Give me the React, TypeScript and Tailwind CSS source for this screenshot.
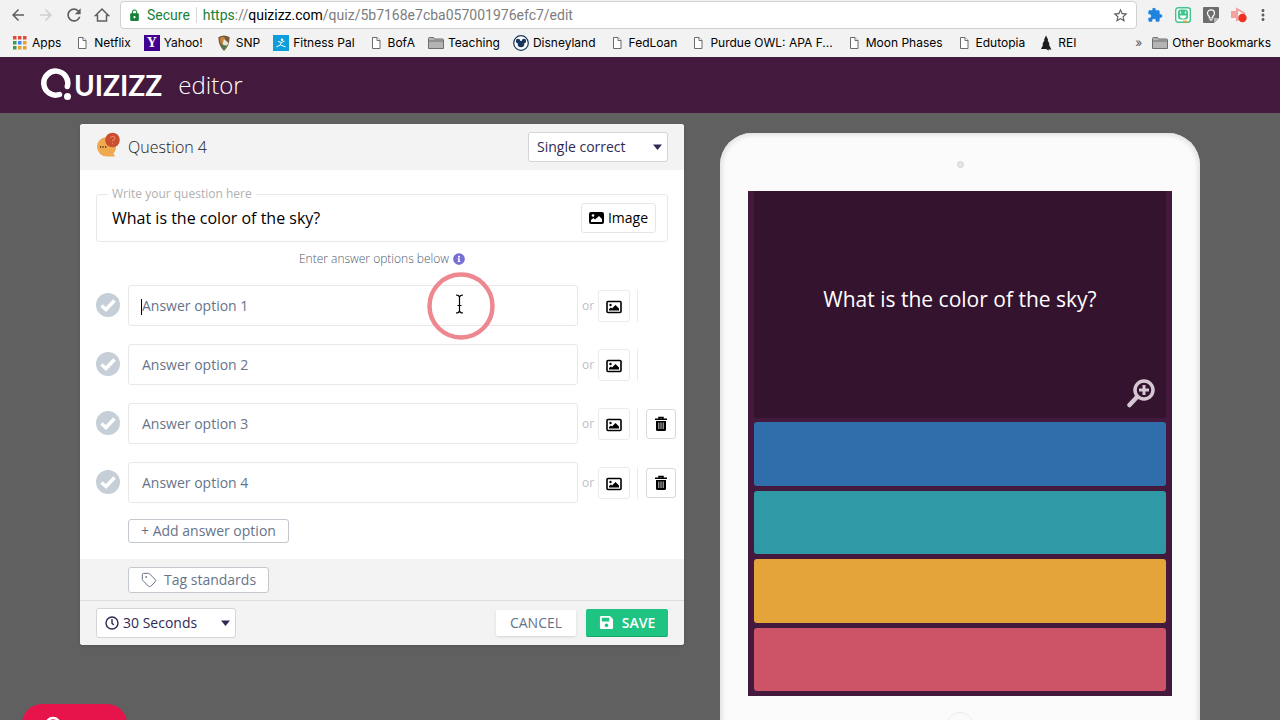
import type { ReactNode } from 'react'
import { Tag } from 'lucide-react'
import { FaInfoCircle, FaSave } from 'react-icons/fa'
import { MdArrowBack, MdArrowForward, MdExtension, MdLock, MdMoreVert, MdRefresh, MdStarBorder } from 'react-icons/md'

const PageIcon = () => (
  <svg width="16" height="16" viewBox="0 0 16 16" fill="#fff" stroke="#6b6b6b">
    <path d="M4.5 2.5h4.5l3 3v8h-7.5z" />
    <path d="M9 2.5v3h3" />
  </svg>
)

const FolderIcon = () => (
  <svg width="16" height="16" viewBox="0 0 16 16">
    <path d="M.5 13.5v-10q0-1 1-1h4l1 1.5h8q1 0 1 1v8.500z" fill="#b4b4b4" stroke="#6f6f6f" />
    <path d="M1 6h14" stroke="#6f6f6f" />
  </svg>
)

const AppsIcon = () => {
  const colors = ['#dd4b39', '#dd4b39', '#dd4b39', '#3c9a4e', '#4285f4', '#e8a02c', '#3c9a4e', '#e8a02c', '#e8a02c']
  return (
    <svg width="16" height="16" viewBox="0 0 16 16">
      {colors.map((c, i) => (
        <rect key={i} x={1 + (i % 3) * 5} y={1 + Math.floor(i / 3) * 5} width="3.500" height="3.500" fill={c} />
      ))}
    </svg>
  )
}

const YahooIcon = () => (
  <span className="w-4 h-4 bg-[#400090] text-white text-sm leading-4 text-center font-['Liberation_Serif',serif] font-bold">Y</span>
)

const ParkIcon = () => (
  <svg width="16" height="16" viewBox="0 0 16 16">
    <path d="M2.500 2q5.500-3 11 0 .5 8-5.500 14Q2 10 2.500 2z" fill="#7a5a3c" />
    <path d="M4 3Q7 1 9 3L7.500 9 4.500 8z" fill="#c8873c" />
    <path d="M8 4l4.500 4-2 3H6z" fill="#e9e6dc" />
    <path d="M4.500 9l3.500 1 3.500 1L8 15z" fill="#4f7d4a" />
  </svg>
)

const FitnessIcon = () => (
  <svg width="16" height="16" viewBox="0 0 16 16">
    <rect width="16" height="16" fill="#0c9fdc" />
    <circle cx="9" cy="4.800" r="1.200" fill="#fff" />
    <path d="M5 6.500l3.500 1 3-1.500M8.500 7.500L7 10.200l-3.500 1.600M7.500 10l5 1.800" fill="none" stroke="#fff" />
  </svg>
)

const MouseIcon = () => (
  <svg width="16" height="16" viewBox="0 0 16 16" fill="#17365c">
    <circle cx="8" cy="8" r="7.300" fill="#fff" stroke="#17365c" strokeWidth="1.200" />
    <circle cx="5" cy="6" r="2.200" />
    <circle cx="11" cy="6" r="2.200" />
    <circle cx="8" cy="9" r="3.300" />
  </svg>
)

const TreeIcon = () => (
  <svg width="16" height="16" viewBox="0 0 16 16" fill="#1d1d1d">
    <path d="M8 .5l2 4-.3.8 1.800 3.700-.5.7 2.500 5-3-.5.500 1.500L8 14H3l2-4-.5-1 2-4-.4-.6z" />
  </svg>
)

const bookmarks: { label: string; icon: ReactNode }[] = [
  { label: 'Apps', icon: <AppsIcon /> },
  { label: 'Netflix', icon: <PageIcon /> },
  { label: 'Yahoo!', icon: <YahooIcon /> },
  { label: 'SNP', icon: <ParkIcon /> },
  { label: 'Fitness Pal', icon: <FitnessIcon /> },
  { label: 'BofA', icon: <PageIcon /> },
  { label: 'Teaching', icon: <FolderIcon /> },
  { label: 'Disneyland', icon: <MouseIcon /> },
  { label: 'FedLoan', icon: <PageIcon /> },
  { label: 'Purdue OWL: APA F...', icon: <PageIcon /> },
  { label: 'Moon Phases', icon: <PageIcon /> },
  { label: 'Edutopia', icon: <PageIcon /> },
  { label: 'REI', icon: <TreeIcon /> },
]

function Bookmark({ label, icon }: { label: string; icon: ReactNode }) {
  return (
    <a href="#" className="flex items-center gap-1 whitespace-nowrap">
      {icon}
      {label}
    </a>
  )
}

function BrowserBar() {
  return (
    <div className="shrink-0 bg-[#f2f2f2] text-black font-[Inter,sans-serif]">
      <div className="flex items-center h-[30px] pl-2 pr-2 text-[#5f5f5f]">
        <div className="flex items-center gap-2 mr-2">
          <button aria-label="Back" className="w-5 flex justify-center"><MdArrowBack size={18} /></button>
          <button aria-label="Forward" className="w-5 flex justify-center text-[#cfcfcf]"><MdArrowForward size={18} /></button>
          <button aria-label="Reload" className="w-5 flex justify-center"><MdRefresh size={20} /></button>
          <button aria-label="Home" className="w-5 flex justify-center">
            <svg width="16" height="16" viewBox="0 0 16 16" fill="none" stroke="currentColor" strokeWidth="1.500">
              <path d="M1.500 8.500L8 2l6.500 6.500H12.500v5.500h-9V8.500z" />
            </svg>
          </button>
        </div>
        <div className="flex-1 flex items-center h-7 px-[7px] bg-white border border-[#d0d0d0] rounded font-[Roboto,sans-serif] text-sm">
          <MdLock size={13} className="text-[#188038] mr-1.5" />
          <span className="text-[#188038]">Secure</span>
          <span className="w-px h-4 mx-1.5 bg-[#d8d8d8]" />
          <span className="flex-1 text-[#7d7d7d]">
            <span className="text-[#188038]">https</span>://<span className="text-black">quizizz.com</span>/quiz/5b7168e7cba057001976efc7/edit
          </span>
          <button aria-label="Bookmark this page"><MdStarBorder size={17} /></button>
        </div>
        <div className="flex items-center gap-3 ml-2.5">
          <MdExtension size={16} className="text-[#1f84e0]" />
          <svg width="16" height="16" viewBox="0 0 16 16">
            <rect x=".7" y=".7" width="14.600" height="14.600" rx="2.500" fill="#fff" stroke="#41c48c" strokeWidth="1.400" />
            <rect x="3" y="2.500" width="10" height="10" rx="3" fill="#41c48c" />
            <path d="M5.500 4.500v2M10.500 4.500v2" stroke="#fff" strokeWidth="1.300" />
            <path d="M4.500 8.500h7q-.5 3-3.500 3t-3.500-3z" fill="#fff" />
            <path d="M8 14.500h4" stroke="#e5a13a" strokeWidth="1.800" />
          </svg>
          <svg width="16" height="16" viewBox="0 0 16 16">
            <path d="M1 0h14q1 0 1 1v10l-5 5H1q-1 0-1-1V1q0-1 1-1z" fill="#6d6d6d" />
            <path d="M11 16v-5h5z" fill="#b5b5b5" />
            <path d="M6.300 9.500Q4.500 8 4.500 6.300a3.500 3.500 0 017 0Q11.500 8 9.700 9.500V11H6.300zM6.500 12.800h3" fill="none" stroke="#fff" strokeWidth="1.200" />
          </svg>
          <svg width="16" height="16" viewBox="0 0 16 16">
            <rect x="0" y="4" width="5" height="7" fill="#f3a29d" />
            <path d="M6 2l7 4v4l-7 3z" fill="none" stroke="#f3a29d" strokeWidth="2" />
            <circle cx="11.500" cy="11" r="4.200" fill="#ef3023" />
          </svg>
        </div>
        <button aria-label="Menu" className="ml-[7px]"><MdMoreVert size={18} /></button>
      </div>
      <nav className="flex items-center h-[27px] pl-3 pr-[9px] pb-0.5 text-xs">
        <div className="flex-1 flex items-center gap-[13px]">
          {bookmarks.map((b) => <Bookmark key={b.label} {...b} />)}
        </div>
        <span className="mr-2.5 text-[#555]">»</span>
        <Bookmark label="Other Bookmarks" icon={<FolderIcon />} />
      </nav>
    </div>
  )
}

function Logo() {
  return (
    <div role="img" aria-label="Quizizz" className="flex items-center h-9 text-white">
      <svg width="32" height="34" viewBox="0 0 32 34" fill="none" className="mr-0.5">
        <path d="M19.500 26.500A12 12 0 1 1 27.300 18.500" stroke="#fff" strokeWidth="5.500" strokeLinecap="round" />
        <circle cx="27.500" cy="28.500" r="3.500" fill="#fff" />
      </svg>
      <span className="font-[Lato,sans-serif] font-bold text-[28px] leading-none">UIZIZZ</span>
    </div>
  )
}

const Caret = () => (
  <svg width="9" height="6" viewBox="0 0 9 6" className="absolute right-1.5 top-3 pointer-events-none" fill="#2f2a55">
    <path d="M0 .5h9L4.500 6z" />
  </svg>
)

const PictureIcon = () => (
  <svg width="16" height="14" viewBox="0 0 16 14">
    <rect x="1" y="1.500" width="14" height="11" rx="1" fill="none" stroke="#000" strokeWidth="1.600" />
    <circle cx="4.500" cy="5" r="1.200" />
    <path d="M3 10.500V9l2-1.500 1 1L9.500 5 13 8.500v2z" />
  </svg>
)

const TrashIcon = () => (
  <svg width="14" height="16" viewBox="0 0 14 16">
    <path d="M1 3.200h12M5 2.500V1.500h4v1" fill="none" stroke="#000" strokeWidth="1.500" />
    <path d="M2 5h10v8.500q0 1.500-1.500 1.500h-7Q2 15 2 13.500z" />
    <path d="M4.800 6.500v6.500M7 6.500v6.500M9.200 6.500v6.500" stroke="#fff" strokeWidth=".8" />
  </svg>
)

const PointerRing = () => (
  <svg width="68" height="68" viewBox="0 0 68 68" fill="none" className="absolute left-[299px] -top-[13px] pointer-events-none">
    <circle cx="34" cy="34" r="31.500" stroke="#ee8890" strokeWidth="4.500" />
    <path d="M29 23q3 0 3.500 2 .5-2 3.500-2M32.500 25v14M29 41q3 0 3.500-2 .5 2 3.500 2M30.500 33.500h4" stroke="#000" strokeWidth="1.200" />
  </svg>
)

function AnswerRow({ n, removable, active }: { n: number; removable: boolean; active: boolean }) {
  return (
    <div className="flex items-center">
      <label className="grid w-6 h-6 mr-2 mb-0.5">
        <input
          type="radio"
          name="correct"
          aria-label={`Mark option ${n} as correct`}
          className="[grid-area:1/1] appearance-none w-6 h-6 rounded-full bg-[#c6cfd8]"
        />
        <svg width="24" height="24" viewBox="0 0 24 24" className="[grid-area:1/1] pointer-events-none" fill="none">
          <path d="M5.500 12.500l4.500 4 8.500-9" stroke="#fff" strokeWidth="3.500" />
        </svg>
      </label>
      <div className="relative flex-1">
        <input
          type="text"
          aria-label={`Answer option ${n}`}
          placeholder={`Answer option ${n}`}
          className="block w-full h-[41px] px-[13px] border border-[#e8e8ea] rounded-[3px] text-sm text-black placeholder:text-[#667489] placeholder:opacity-100"
        />
        {active && <span className="absolute left-[13px] top-3.5 w-px h-4 bg-black" />}
        {active && <PointerRing />}
      </div>
      <span className="w-5 text-center text-xs text-[#b9bfc8]">or</span>
      <button aria-label="Add image" className="flex items-center justify-center w-8 h-8 pt-0.5 border border-[#ebebed] rounded-[3px]">
        <PictureIcon />
      </button>
      <span className="w-px h-8 ml-[7px] mr-2 bg-[#ebebed]" />
      <div className="w-[30px]">
        {removable && (
          <button aria-label="Delete option" className="flex items-center justify-center w-[30px] h-[30px] border border-[#d9d9dc] rounded-[3px]">
            <TrashIcon />
          </button>
        )}
      </div>
    </div>
  )
}

function QuestionCard() {
  return (
    <section className="flex-1 rounded-[3px] overflow-hidden bg-white shadow">
      <div className="flex items-center h-[46px] px-4 bg-[#f3f3f3]">
        <svg width="24" height="26" viewBox="0 0 24 26" className="mr-2 mb-1">
          <path d="M11 5a10 9.700 0 100 19.500h8l-1.500-3A10 10 0 0011 5z" fill="#efa94e" />
          <circle cx="16.500" cy="8" r="7.300" fill="#c94f30" />
          <path d="M14.300 6.300q.2-2 2.300-2 2.200 0 2.200 1.900 0 1.200-1.400 1.900-.9.500-.9 1.500M16.500 11v1.300" fill="none" stroke="#e5815f" strokeWidth="1.200" />
          <path d="M4 15h1.200M6.500 15h1.200M9 15h1.200" stroke="#4a2d20" strokeWidth="1.300" />
        </svg>
        <h1 className="flex-1 text-base font-light text-[#222]">Question 4</h1>
        <div className="relative">
          <select aria-label="Question type" className="block appearance-none w-[140px] h-[30px] pl-2 bg-white border border-[#d5d5d8] rounded-[3px] text-sm text-[#2f2a55]">
            <option>Single correct</option>
          </select>
          <Caret />
        </div>
      </div>

      <div className="pt-6 pb-4">
        <div className="relative flex items-center h-12 mx-4 pl-[15px] pr-[11px] border border-[#e8e8ea] rounded-[3px]">
          <label htmlFor="question" className="absolute left-[11px] -top-2.5 px-1 bg-white text-xs leading-[18px] text-[#b0b0b0]">
            Write your question here
          </label>
          <input id="question" type="text" defaultValue="What is the color of the sky?" className="flex-1 text-base text-black" />
          <button className="flex items-center gap-1 h-[30px] px-[7px] border border-[#e6e6e8] rounded-[3px] text-sm text-black">
            <svg width="15" height="12" viewBox="0 0 15 12">
              <rect width="15" height="12" rx="2" />
              <circle cx="4" cy="3.500" r="1.300" fill="#fff" />
              <path d="M2 10V8l2.500-2 1.500 1.500L10 4l3 3v3z" fill="#fff" />
            </svg>
            Image
          </button>
        </div>
        <p className="flex items-center justify-center gap-1 h-[18px] mt-2 text-xs font-light text-[#4d5b70]">
          Enter answer options below <FaInfoCircle size={12} className="text-[#786fd5]" />
        </p>
        <div className="flex flex-col gap-[18px] mt-[17px] pl-4 pr-2">
          {[1, 2, 3, 4].map((n) => <AnswerRow key={n} n={n} removable={n > 2} active={n === 1} />)}
        </div>
        <button className="flex items-center h-6 mt-4 ml-12 px-3 border border-[#c3c8cf] rounded-[3px] text-sm text-[#667489]">
          + Add answer option
        </button>
      </div>

      <div className="px-12 pt-2 pb-[7px] bg-[#f3f3f3] border-b border-[#dcdcde]">
        <button className="flex items-center gap-[7px] h-[26px] px-3 bg-white border border-[#c3c8cf] rounded-[3px] text-sm text-[#667489]">
          <Tag size={16} strokeWidth={1.500} />
          Tag standards
        </button>
      </div>

      <div className="flex items-center h-11 px-4 bg-[#f3f3f3] text-sm">
        <div className="relative mr-auto">
          <svg width="14" height="14" viewBox="0 0 14 14" className="absolute left-[9px] top-2 pointer-events-none z-10" fill="none" stroke="#2f2a55" strokeWidth="1.400">
            <circle cx="7" cy="7" r="6" />
            <path d="M7 3v4.200l1.800 1.800" />
          </svg>
          <select aria-label="Time limit" className="block appearance-none w-[140px] h-[30px] pl-[26px] bg-white border border-[#d5d5d8] rounded-[3px] text-[#2f2a55]">
            <option>30 Seconds</option>
          </select>
          <Caret />
        </div>
        <button className="h-[26px] w-20 mr-2.5 bg-white rounded-xs shadow-sm text-[#667489]">CANCEL</button>
        <button className="flex items-center justify-center gap-2 w-[82px] h-7 bg-[#1fc483] border-b border-[#17a56c] rounded-xs text-white font-semibold">
          <FaSave size={15} />
          SAVE
        </button>
      </div>
    </section>
  )
}

function TabletPreview() {
  return (
    <section className="relative w-[480px] mt-[9px] px-7 pt-[58px] pb-[70px] rounded-[32px] bg-[#fbfbfb] shadow-[inset_0_0_5px_2px_#dedede]">
      <span className="absolute left-[237px] top-7 w-[7px] h-[7px] rounded-full bg-[#e6e6e6] border border-[#d2d2d2]" />
      <div className="flex flex-col h-[505px] px-1.5 pb-[5px] gap-1 bg-[#431a3d]">
        <div className="relative flex items-center justify-center h-[227px] pb-2.5 bg-[#34132f] text-[21px] text-white">
          What is the color of the sky?
          <button aria-label="Zoom" className="absolute right-[11px] bottom-2.5">
            <svg width="28" height="30" viewBox="0 0 28 30" fill="none" stroke="#d6c8d3">
              <circle cx="17" cy="12" r="9" strokeWidth="3.500" />
              <path d="M17 7v10M12 12h10" strokeWidth="3" />
              <path d="M10 19l-7.500 8" strokeWidth="4.500" strokeLinecap="round" />
            </svg>
          </button>
        </div>
        <div className="flex-1 flex flex-col gap-[5px]">
          <div className="flex-1 rounded-[3px] bg-[#2f6dab]" />
          <div className="flex-1 rounded-[3px] bg-[#2f9aa5]" />
          <div className="flex-1 rounded-[3px] bg-[#e4a43a]" />
          <div className="flex-1 rounded-[3px] bg-[#cd5367]" />
        </div>
      </div>
      <span className="absolute left-[226px] bottom-[26px] w-7 h-7 rounded-full border border-[#ebebeb]" />
    </section>
  )
}

export default function App() {
  return (
    <div className="relative flex flex-col h-screen overflow-hidden bg-[#606060] font-['Open_Sans',sans-serif]">
      <BrowserBar />
      <header className="flex items-center shrink-0 h-14 px-10 gap-4 bg-[#431a3d]">
        <Logo />
        <span className="text-2xl font-light text-white">editor</span>
      </header>
      <main className="w-full max-w-[1120px] mx-auto mt-[11px] flex items-start gap-9">
        <QuestionCard />
        <TabletPreview />
      </main>
      <button aria-label="Help" className="absolute left-[22px] -bottom-6 w-[105px] h-10 pl-[22px] rounded-full bg-[#e6144a]">
        <svg width="18" height="18" viewBox="0 0 18 18" fill="none" stroke="#fff" strokeWidth="2.500">
          <circle cx="9" cy="10" r="7" />
        </svg>
      </button>
    </div>
  )
}
